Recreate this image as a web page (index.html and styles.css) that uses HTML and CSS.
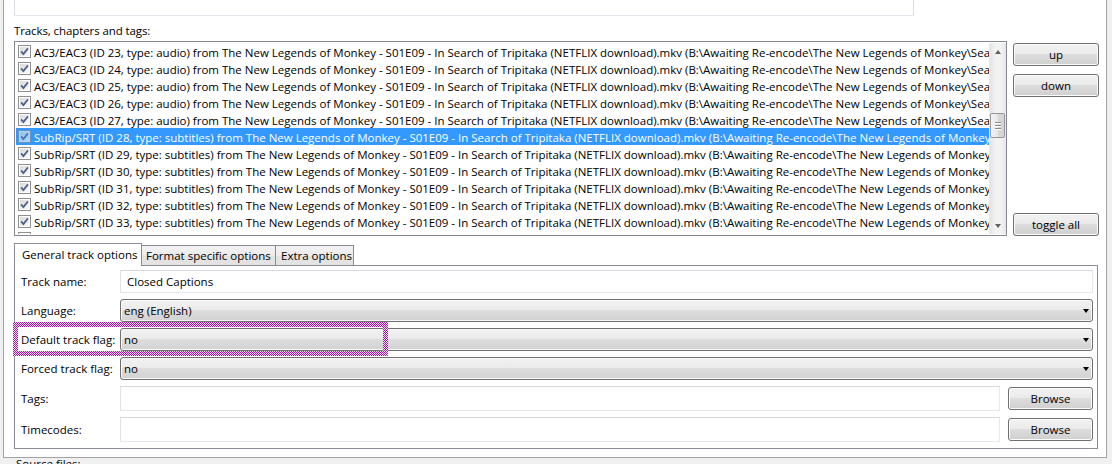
FILE: index.html
```html
<!DOCTYPE html>
<html>
<head>
<meta charset="utf-8">
<title>Tracks</title>
<link rel="stylesheet" href="styles.css">
</head>
<body>
<svg class="defs" width="0" height="0" aria-hidden="true">
  <defs>
    <linearGradient id="cbg" x1="0" y1="0" x2="1" y2="1">
      <stop offset="0" stop-color="#d9d9d9"/>
      <stop offset="1" stop-color="#fbfbfb"/>
    </linearGradient>
    <symbol id="cb" viewBox="0 0 13 13">
      <rect x="0.5" y="0.5" width="12" height="12" fill="#fff" stroke="#8e8f8f"/>
      <rect x="2" y="2" width="9" height="9" fill="url(#cbg)"/>
      <path d="M3.1 6.4 L5.4 9.1 L9.9 3.4" fill="none" stroke="#4c5f8c" stroke-width="1.7"/>
    </symbol>
  </defs>
</svg>
<div class="frame">
  <div class="topinput"></div>
  <div class="caption">Tracks, chapters and tags:</div>
  <div class="tracks">
    <div class="list">
      <div class="rows">
        <div class="row"><svg class="cb" viewBox="0 0 13 13"><use href="#cb"/></svg><span>AC3/EAC3 (ID 23, type: audio) from The New Legends of Monkey - S01E09 - In Search of Tripitaka (NETFLIX download).mkv (B:\Awaiting Re-encode\The New Legends of Monkey\Season 1)</span></div>
        <div class="row"><svg class="cb" viewBox="0 0 13 13"><use href="#cb"/></svg><span>AC3/EAC3 (ID 24, type: audio) from The New Legends of Monkey - S01E09 - In Search of Tripitaka (NETFLIX download).mkv (B:\Awaiting Re-encode\The New Legends of Monkey\Season 1)</span></div>
        <div class="row"><svg class="cb" viewBox="0 0 13 13"><use href="#cb"/></svg><span>AC3/EAC3 (ID 25, type: audio) from The New Legends of Monkey - S01E09 - In Search of Tripitaka (NETFLIX download).mkv (B:\Awaiting Re-encode\The New Legends of Monkey\Season 1)</span></div>
        <div class="row"><svg class="cb" viewBox="0 0 13 13"><use href="#cb"/></svg><span>AC3/EAC3 (ID 26, type: audio) from The New Legends of Monkey - S01E09 - In Search of Tripitaka (NETFLIX download).mkv (B:\Awaiting Re-encode\The New Legends of Monkey\Season 1)</span></div>
        <div class="row"><svg class="cb" viewBox="0 0 13 13"><use href="#cb"/></svg><span>AC3/EAC3 (ID 27, type: audio) from The New Legends of Monkey - S01E09 - In Search of Tripitaka (NETFLIX download).mkv (B:\Awaiting Re-encode\The New Legends of Monkey\Season 1)</span></div>
        <div class="row selected"><svg class="cb" viewBox="0 0 13 13"><use href="#cb"/></svg><span>SubRip/SRT (ID 28, type: subtitles) from The New Legends of Monkey - S01E09 - In Search of Tripitaka (NETFLIX download).mkv (B:\Awaiting Re-encode\The New Legends of Monkey\Season 1)</span></div>
        <div class="row"><svg class="cb" viewBox="0 0 13 13"><use href="#cb"/></svg><span>SubRip/SRT (ID 29, type: subtitles) from The New Legends of Monkey - S01E09 - In Search of Tripitaka (NETFLIX download).mkv (B:\Awaiting Re-encode\The New Legends of Monkey\Season 1)</span></div>
        <div class="row"><svg class="cb" viewBox="0 0 13 13"><use href="#cb"/></svg><span>SubRip/SRT (ID 30, type: subtitles) from The New Legends of Monkey - S01E09 - In Search of Tripitaka (NETFLIX download).mkv (B:\Awaiting Re-encode\The New Legends of Monkey\Season 1)</span></div>
        <div class="row"><svg class="cb" viewBox="0 0 13 13"><use href="#cb"/></svg><span>SubRip/SRT (ID 31, type: subtitles) from The New Legends of Monkey - S01E09 - In Search of Tripitaka (NETFLIX download).mkv (B:\Awaiting Re-encode\The New Legends of Monkey\Season 1)</span></div>
        <div class="row"><svg class="cb" viewBox="0 0 13 13"><use href="#cb"/></svg><span>SubRip/SRT (ID 32, type: subtitles) from The New Legends of Monkey - S01E09 - In Search of Tripitaka (NETFLIX download).mkv (B:\Awaiting Re-encode\The New Legends of Monkey\Season 1)</span></div>
        <div class="row"><svg class="cb" viewBox="0 0 13 13"><use href="#cb"/></svg><span>SubRip/SRT (ID 33, type: subtitles) from The New Legends of Monkey - S01E09 - In Search of Tripitaka (NETFLIX download).mkv (B:\Awaiting Re-encode\The New Legends of Monkey\Season 1)</span></div>
        <div class="row"><svg class="cb" viewBox="0 0 13 13"><use href="#cb"/></svg><span>SubRip/SRT (ID 34, type: subtitles) from The New Legends of Monkey - S01E09 - In Search of Tripitaka (NETFLIX download).mkv (B:\Awaiting Re-encode\The New Legends of Monkey\Season 1)</span></div>
      </div>
      <div class="scrollbar">
        <div class="sb-btn"><span class="tri-up"></span></div>
        <div class="sb-track">
          <div class="sb-thumb"><span class="grip"></span><span class="grip"></span><span class="grip"></span></div>
        </div>
        <div class="sb-btn"><span class="tri-down"></span></div>
      </div>
    </div>
    <div class="side">
      <button class="btn">up</button>
      <button class="btn">down</button>
      <button class="btn toggle">toggle all</button>
    </div>
  </div>
  <div class="tabs">
    <div class="tab active">General track options</div>
    <div class="tab t-format">Format specific options</div>
    <div class="tab t-extra">Extra options</div>
  </div>
  <div class="panel">
    <div class="form">
      <div class="lbl">Track name:</div>
      <div class="field span2">Closed Captions</div>
      <div class="lbl">Language:</div>
      <div class="combo span2"><span>eng (English)</span><span class="arrow"></span></div>
      <div class="lbl">Default track flag:</div>
      <div class="combo span2"><span>no</span><span class="arrow"></span></div>
      <div class="lbl">Forced track flag:</div>
      <div class="combo span2"><span>no</span><span class="arrow"></span></div>
      <div class="lbl">Tags:</div>
      <div class="field"></div>
      <button class="btn browse">Browse</button>
      <div class="lbl">Timecodes:</div>
      <div class="field"></div>
      <button class="btn browse">Browse</button>
    </div>
    <div class="flagmark"></div>
  </div>
</div>
<div class="source">Source files:</div>
</body>
</html>
```

FILE: styles.css
```css
html, body {
  margin: 0;
  padding: 0;
}
body {
  background: #f0f0f0;
  font-family: "Open Sans", "Noto Sans", sans-serif;
  font-size: 11.5px;
  color: #000;
  width: 1112px;
  height: 464px;
  overflow: hidden;
}
.defs {
  position: absolute;
  width: 0;
  height: 0;
}
.frame {
  margin-left: 3px;
  width: 1104px;
  box-sizing: border-box;
  background: #fff;
  border-left: 1px solid #a3a3a3;
  border-right: 1px solid #a3a3a3;
  border-bottom: 1px solid #a3a3a3;
  padding: 0 0 8px 10px;
}
.topinput {
  width: 900px;
  height: 16px;
  box-sizing: border-box;
  border: 1px solid #abadb3;
  border-top: none;
  border-left-color: #dbdfe6;
  border-right-color: #dbdfe6;
  border-bottom-color: #e3e9ef;
}
.caption {
  margin-top: 6px;
  line-height: 17px;
  height: 17px;
  letter-spacing: -0.1px;
}
.tracks {
  display: flex;
  margin-top: 2px;
  gap: 6px;
}
.list {
  width: 993px;
  height: 195px;
  box-sizing: border-box;
  border: 1px solid #828790;
  background: #fff;
  display: flex;
  padding: 1px 0 1px 1px;
  overflow: hidden;
}
.rows {
  flex: 1;
  overflow: hidden;
  min-width: 0;
}
.row {
  height: 17px;
  line-height: 17px;
  display: flex;
  align-items: center;
  white-space: nowrap;
  overflow: hidden;
  padding-left: 2px;
}
.row span {
  margin-left: 3px;
  padding-top: 1px;
}
.cb {
  width: 13px;
  height: 13px;
  flex: none;
}
.row.selected {
  background: #3399ff;
  color: #fff;
}
.row.selected .cb {
  opacity: 0.6;
}
.scrollbar {
  width: 17px;
  flex: none;
  display: flex;
  flex-direction: column;
  background: linear-gradient(90deg, #e3e3e3, #f2f2f2 30%, #f2f2f2 70%, #e6e6e6);
  border-left: 1px solid #e8e8e8;
  box-sizing: border-box;
}
.sb-btn {
  height: 17px;
  display: flex;
  align-items: center;
  justify-content: center;
  flex: none;
}
.tri-up {
  width: 0;
  height: 0;
  border-left: 3.5px solid transparent;
  border-right: 3.5px solid transparent;
  border-bottom: 4px solid #606060;
}
.tri-down {
  width: 0;
  height: 0;
  border-left: 3.5px solid transparent;
  border-right: 3.5px solid transparent;
  border-top: 4px solid #606060;
}
.sb-track {
  flex: 1;
  padding-top: 53px;
}
.sb-thumb {
  margin: 0 1px 0 0;
  height: 25px;
  box-sizing: border-box;
  border: 1px solid #979797;
  border-radius: 2px;
  background: linear-gradient(90deg, #f3f3f3, #e8e8e8 50%, #d9d9d9 51%, #d4d4d4);
  display: flex;
  flex-direction: column;
  align-items: center;
  justify-content: center;
  gap: 1px;
}
.grip {
  width: 6px;
  height: 1px;
  background: #8a8a8a;
  border-bottom: 1px solid #fff;
}
.side {
  width: 86px;
  display: flex;
  flex-direction: column;
  padding-top: 2px;
  gap: 8px;
}
.btn {
  font-family: inherit;
  font-size: inherit;
  color: #000;
  height: 23px;
  box-sizing: border-box;
  border: 1px solid #707070;
  border-radius: 3px;
  background: linear-gradient(#f2f2f2 0%, #ebebeb 45%, #dddddd 50%, #cfcfcf 100%);
  box-shadow: inset 0 0 0 1px #fbfbfb;
  padding: 0;
  line-height: 20px;
}
.side .btn {
  width: 86px;
}
.side .toggle {
  margin-top: auto;
}
.tabs {
  display: flex;
  align-items: flex-end;
  margin-top: 7px;
  height: 22px;
}
.tab {
  box-sizing: border-box;
  height: 20px;
  border: 1px solid #898c95;
  border-bottom: none;
  background: linear-gradient(#f3f3f3, #ebebeb 50%, #e2e2e2 51%, #e3e3e3);
  padding-left: 4px;
  line-height: 19px;
  white-space: nowrap;
}
.tab.active {
  width: 128px;
  height: 23px;
  margin-bottom: -1px;
  background: #fff;
  position: relative;
  z-index: 1;
  padding-left: 7px;
  line-height: 22px;
}
.t-format {
  width: 134px;
  border-left: none;
  padding-left: 4px;
}
.t-extra {
  width: 78px;
  border-left: none;
  padding-left: 5px;
}
.panel {
  position: relative;
  width: 1084px;
  box-sizing: border-box;
  border: 1px solid #898c95;
  background: #fff;
  padding: 4px 4px 6px 6px;
}
.form {
  display: grid;
  grid-template-columns: 99px 1fr 93px;
  grid-template-rows: 23px 23px 23px 23px 25px 25px;
  row-gap: 6px;
  align-items: center;
}
.lbl {
  white-space: nowrap;
}
.span2 {
  grid-column: 2 / 4;
}
.field {
  height: 100%;
  box-sizing: border-box;
  border: 1px solid #e3e9ef;
  border-top-color: #d6d8dc;
  border-left-color: #dfe2e6;
  background: #fff;
  padding-left: 6px;
  display: flex;
  align-items: center;
}
.combo {
  height: 100%;
  box-sizing: border-box;
  border: 1px solid #707070;
  border-radius: 3px;
  background: linear-gradient(#f2f2f2 0%, #ebebeb 45%, #dddddd 50%, #d2d2d2 100%);
  box-shadow: inset 0 0 0 1px #f8f8f8;
  display: flex;
  align-items: center;
  justify-content: space-between;
  padding: 0 3px 0 3px;
}
.arrow {
  width: 0;
  height: 0;
  border-left: 3.5px solid transparent;
  border-right: 3.5px solid transparent;
  border-top: 4px solid #000;
  margin-top: 1px;
}
.browse {
  width: 85px;
  justify-self: end;
  align-self: center;
}
.flagmark {
  position: absolute;
  left: -2px;
  top: 56px;
  width: 375px;
  height: 34px;
  box-sizing: border-box;
  padding: 5px;
  background: repeating-conic-gradient(#9c1fa0 0 25%, #f0d6f0 0 50%) 0 0 / 2px 2px;
  -webkit-mask: linear-gradient(#000 0 0) content-box, linear-gradient(#000 0 0);
  -webkit-mask-composite: xor;
  mask-composite: exclude;
}
.source {
  padding-left: 16px;
  line-height: 17px;
  margin-top: -3px;
}
```
